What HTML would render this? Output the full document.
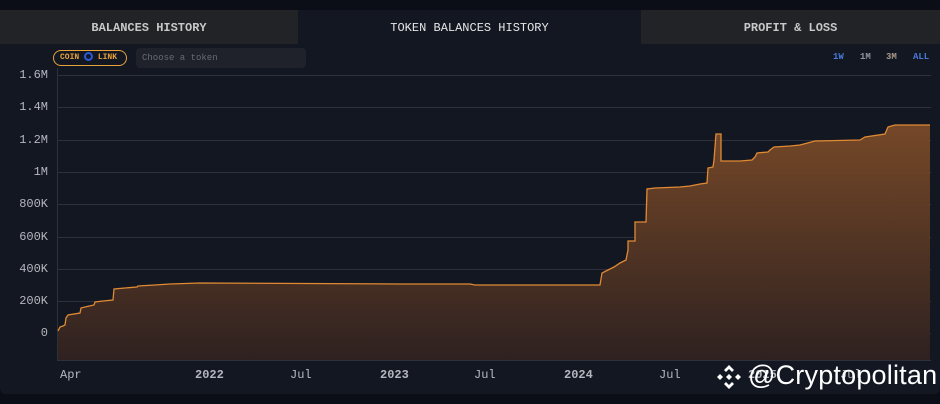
<!DOCTYPE html><html><head><style>
body{margin:0;width:940px;height:404px;background:#0b0e16;font-family:"Liberation Mono",monospace;overflow:hidden;position:relative}
.panel{position:absolute;left:0;top:10px;width:940px;height:384px;background:#131722;border-radius:0 0 6px 6px}
.tab{position:absolute;top:10px;height:34px;line-height:36px;text-align:center;font-size:12px;color:#c8c8c8;font-weight:bold}
.t{position:absolute;font-size:12px;color:#b4b7bd}
.b{position:absolute;top:52px;font-size:9px;font-weight:bold;color:#8e94a0}
</style></head><body>
<div class="panel"></div>
<div class="tab" style="left:0;width:298px;background:#222327">BALANCES HISTORY</div>
<div class="tab" style="left:298px;width:343px;color:#e6e6e6;font-weight:normal">TOKEN BALANCES HISTORY</div>
<div class="tab" style="left:641px;width:299px;background:#222327">PROFIT &amp; LOSS</div>
<div style="position:absolute;left:53px;top:50px;width:74px;height:16px;border:1px solid #e8a33a;border-radius:8px;box-sizing:border-box;font-size:8px;font-weight:bold;color:#e8a33a;line-height:14px;padding-left:6px">COIN <span style="display:inline-block;width:5px;height:5px;border:2px solid #2a5ada;border-radius:50%;vertical-align:-2px"></span> LINK</div>
<div style="position:absolute;left:136px;top:48px;width:170px;height:20px;background:#1f222b;border-radius:4px;font-size:9px;color:#666a73;line-height:20px;padding-left:6px;box-sizing:border-box">Choose a token</div>
<div class="b" style="left:833px;color:#4a78d8">1W</div>
<div class="b" style="left:860px">1M</div>
<div class="b" style="left:886px;color:#a89a8a">3M</div>
<div class="b" style="left:913px;color:#4a78d8">ALL</div>
<svg width="940" height="404" style="position:absolute;left:0;top:0">
<defs><linearGradient id="g" x1="0" y1="0" x2="0" y2="1"><stop offset="0" stop-color="#7a4a28" stop-opacity=".95"/><stop offset="1" stop-color="#2e2120"/></linearGradient></defs>
<g stroke="#2e313a" stroke-width="1">
<line x1="57" x2="931" y1="75.5" y2="75.5"/><line x1="57" x2="931" y1="107.5" y2="107.5"/><line x1="57" x2="931" y1="140.5" y2="140.5"/><line x1="57" x2="931" y1="172.5" y2="172.5"/><line x1="57" x2="931" y1="204.5" y2="204.5"/><line x1="57" x2="931" y1="237.5" y2="237.5"/><line x1="57" x2="931" y1="269.5" y2="269.5"/><line x1="57" x2="931" y1="301.5" y2="301.5"/><line x1="57" x2="931" y1="333.5" y2="333.5"/>
<line x1="57.5" x2="57.5" y1="68" y2="361"/><line x1="57" x2="931" y1="360.5" y2="360.5"/></g>
<path d="M58,331 L60,327 63,326 65,325 66,318 68,315 80,313 81,308 85,307 94,305 95,302 103,301 113,300 114,289 125,288 137,287 138,286 155,285 170,284 200,283 400,284 470,284 475,285 600,285 602,273 606,271 610,269 614,267 620,263 624,261 626,260 628,250 628,241 635,241 635,222 646,222 647,189 655,188 680,187 690,186 700,184 707,183 708,168 713,167 714,160 716,134 721,134 721,161 740,161 752,160 755,157 757,153 768,152 770,150 774,147 790,146 800,145 815,141 860,140 865,137 885,134 888,127 895,125 930,125 930,360 58,360Z" fill="url(#g)"/>
<path d="M58,331 L60,327 63,326 65,325 66,318 68,315 80,313 81,308 85,307 94,305 95,302 103,301 113,300 114,289 125,288 137,287 138,286 155,285 170,284 200,283 400,284 470,284 475,285 600,285 602,273 606,271 610,269 614,267 620,263 624,261 626,260 628,250 628,241 635,241 635,222 646,222 647,189 655,188 680,187 690,186 700,184 707,183 708,168 713,167 714,160 716,134 721,134 721,161 740,161 752,160 755,157 757,153 768,152 770,150 774,147 790,146 800,145 815,141 860,140 865,137 885,134 888,127 895,125 930,125" fill="none" stroke="#e08a34" stroke-width="1.3"/>
</svg>
<div class="t" style="right:892px;top:68px;text-align:right">1.6M</div>
<div class="t" style="right:892px;top:100px">1.4M</div>
<div class="t" style="right:892px;top:133px">1.2M</div>
<div class="t" style="right:892px;top:165px">1M</div>
<div class="t" style="right:892px;top:197px">800K</div>
<div class="t" style="right:892px;top:230px">600K</div>
<div class="t" style="right:892px;top:262px">400K</div>
<div class="t" style="right:892px;top:294px">200K</div>
<div class="t" style="right:892px;top:326px">0</div>
<div class="t" style="left:60px;top:368px">Apr</div>
<div class="t" style="left:195px;top:368px;font-weight:bold">2022</div>
<div class="t" style="left:290px;top:368px">Jul</div>
<div class="t" style="left:380px;top:368px;font-weight:bold">2023</div>
<div class="t" style="left:474px;top:368px">Jul</div>
<div class="t" style="left:564px;top:368px;font-weight:bold">2024</div>
<div class="t" style="left:659px;top:368px">Jul</div>
<div class="t" style="left:748px;top:368px;font-weight:bold">2025</div>
<div class="t" style="left:840px;top:368px">Jul</div>
<svg width="26" height="26" viewBox="0 0 26 26" style="position:absolute;left:716px;top:364px"><g fill="#fff"><path d="M13 1l5 5-2 2-3-3-3 3-2-2z"/><path d="M13 25l5-5-2-2-3 3-3-3-2 2z"/><path d="M1 13l3-3 3 3-3 3z"/><path d="M19 13l3-3 3 3-3 3z"/><path d="M13 10l3 3-3 3-3-3z"/></g></svg>
<div style="position:absolute;left:748px;top:360px;font-family:'Liberation Sans',sans-serif;font-size:27px;color:#fff;letter-spacing:0.2px">@Cryptopolitan</div>
</body></html>
